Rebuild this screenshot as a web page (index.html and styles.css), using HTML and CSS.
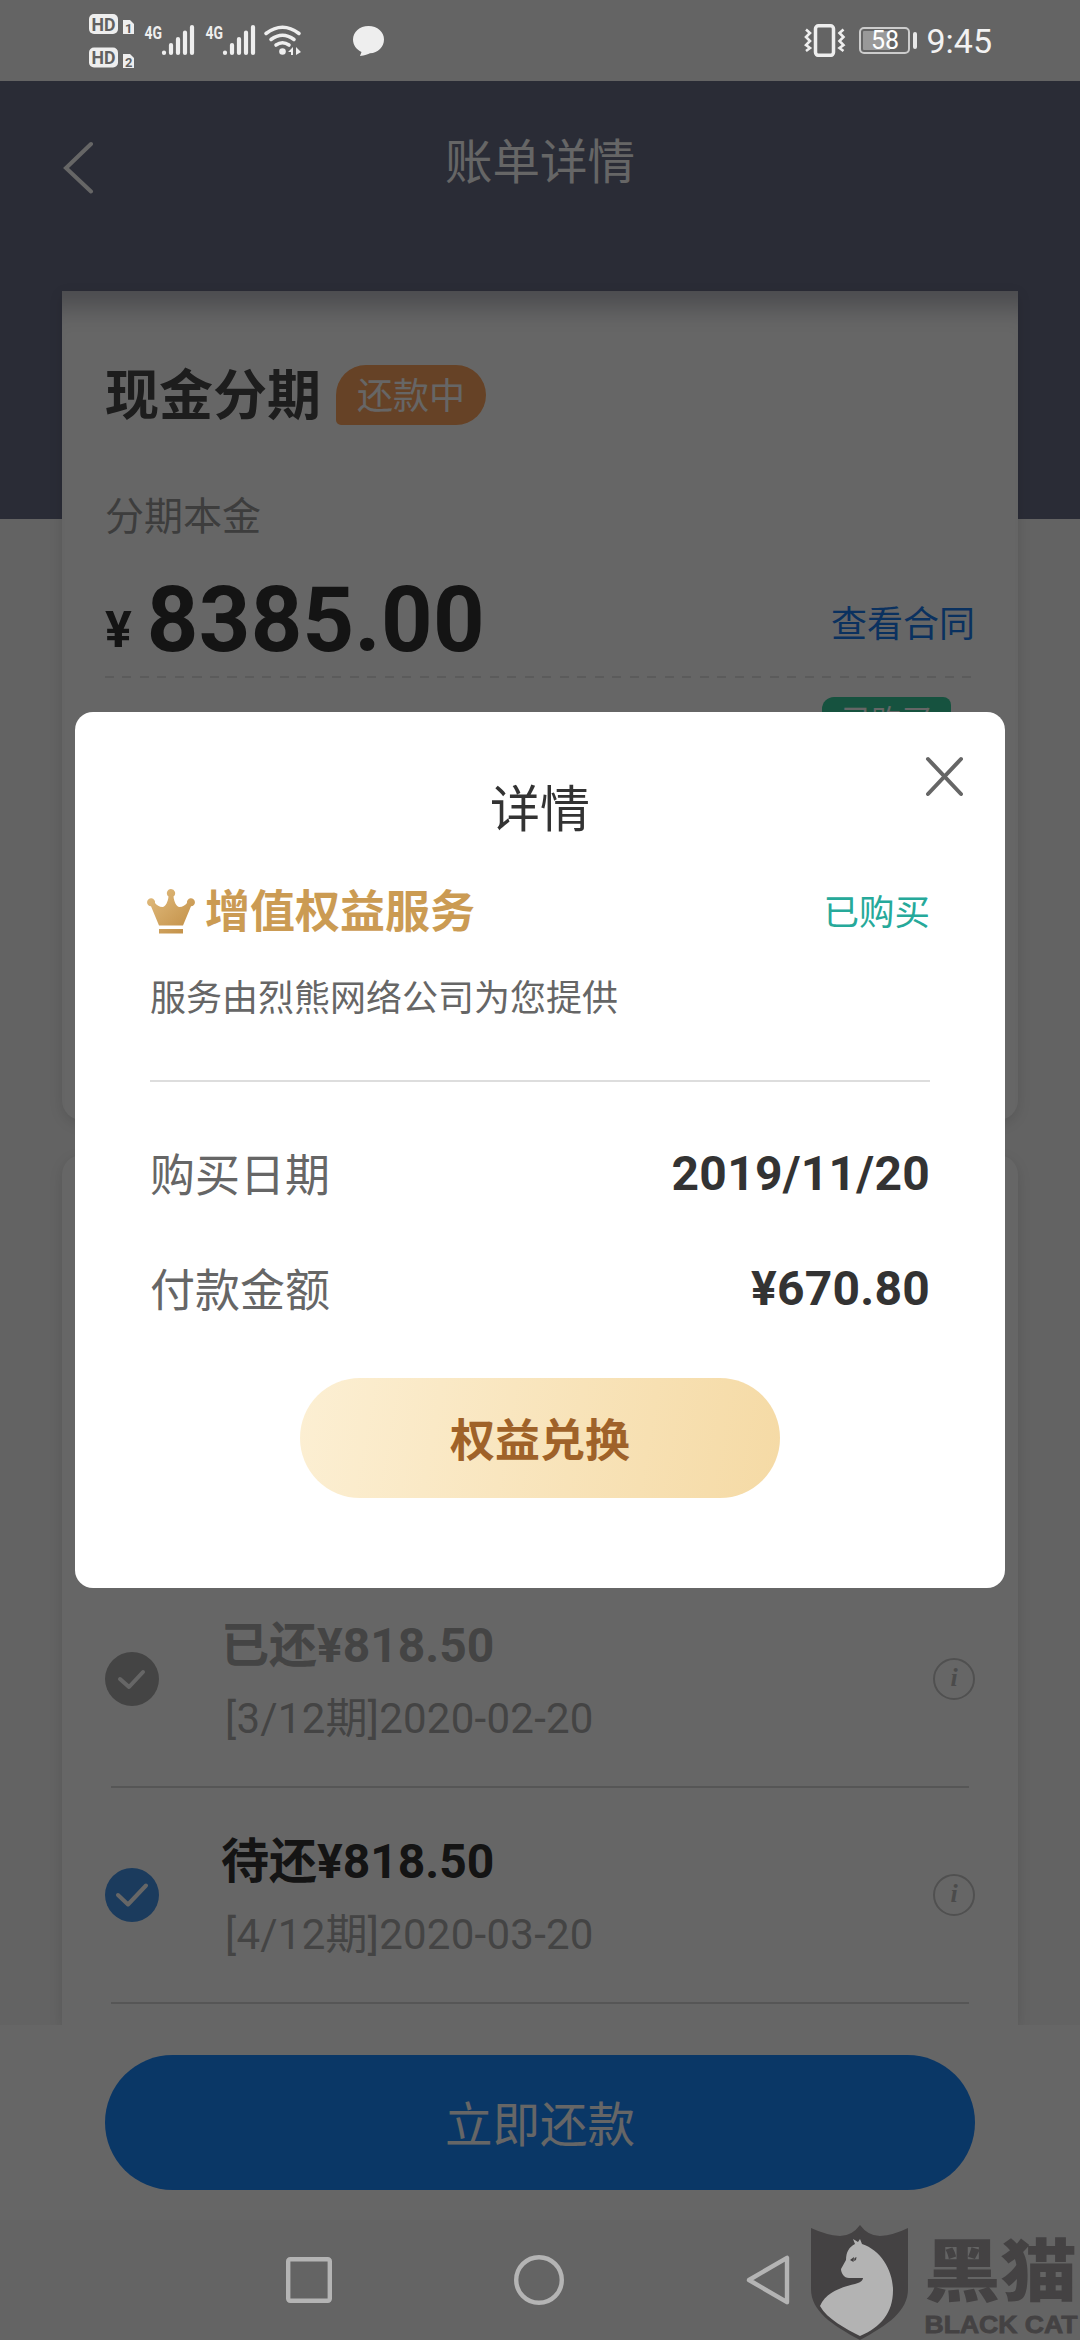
FILE: index.html
```html
<!DOCTYPE html>
<html lang="zh-CN">
<head>
<meta charset="utf-8">
<title>账单详情</title>
<link rel="stylesheet" href="styles.css">
</head>
<body>
<div class="screen">
  <div class="status">
    <svg class="status-left" width="300" height="60" viewBox="88 8 300 60" fill="#eee">
      <rect x="89" y="14" width="29" height="20" rx="5"/>
      <rect x="89" y="47.500" width="29" height="20" rx="5"/>
      <g class="hd-label">
        <text x="91.500" y="30.500" textLength="24" lengthAdjust="spacingAndGlyphs">HD</text>
        <text x="91.500" y="64" textLength="24" lengthAdjust="spacingAndGlyphs">HD</text>
      </g>
      <path d="M123 20h7l4 4v10h-11zM123 54h7l4 4v10h-11z"/>
      <g class="sim-label"><text x="125" y="32.500">1</text><text x="125" y="66.500">2</text></g>
      <g class="net-label">
        <text x="144.500" y="38.500" textLength="17.500" lengthAdjust="spacingAndGlyphs">4G</text>
        <text x="205.500" y="38.500" textLength="17.500" lengthAdjust="spacingAndGlyphs">4G</text>
      </g>
      <g stroke="#eee" stroke-width="4.200" stroke-linecap="round">
        <path d="M164 52.500v.5M171 45v8M178 39v14M185 32.500v20.500M192 27v26"/>
        <path d="M225 52.500v.5M232 45v8M239 39v14M246 32.500v20.500M253 27v26"/>
      </g>
      <g fill="none" stroke="#eee" stroke-width="3.600" stroke-linecap="round">
        <path d="M266 33.500q16.500-12.500 33 0M271 39.500q11.500-8.500 23 0M276 45q6.500-4.500 13 0"/>
      </g>
      <circle cx="282.500" cy="51.500" r="3.300"/>
      <path d="M288 52l5-5v8h-2v-3zM296 47l5 5-5 3z"/>
      <path d="M368.500 26c9 0 15.500 6 15.500 13.500s-6 13.500-14 13.800c-2 .7-5 2.500-10 2.700l1.500-4c-5-2.500-8.500-7-8.500-12.500 0-7.500 6.500-13.500 15.500-13.500z"/>
    </svg>
    <div class="status-right">
      <svg width="42" height="33" viewBox="0 0 42 33" fill="none" stroke="#eee">
        <rect x="11.500" y="1.800" width="18" height="29.500" rx="3" stroke-width="3.500"/>
        <path d="M2 5.500l4 3.500-4 4 4 4-4 4 4 3-4 3M39.500 5.500l-4 3.500 4 4-4 4 4 4-4 3 4 3" stroke-width="2.600"/>
      </svg>
      <div class="battery"><span>58</span></div>
      <div class="battery-tip"></div>
      <div class="clock">9:45</div>
    </div>
  </div>

  <div class="app">
    <div class="page">
      <header class="topbar">
        <svg width="32" height="54" viewBox="0 0 32 54" fill="none" stroke="#fff" stroke-width="4" stroke-linecap="round"><path d="M29 4L4 28l25 23.500"/></svg>
        <h1>账单详情</h1>
      </header>
      <section class="card loan">
        <div class="loan-title"><h2>现金分期</h2><span class="tag">还款中</span></div>
        <div class="label">分期本金</div>
        <div class="amount"><span class="yen">¥</span><span class="num">8385.00</span><a class="link">查看合同</a></div>
        <div class="dashes"></div>
        <div class="bought-tag">已购买</div>
      </section>
      <section class="card plan">
        <div class="row paid">
          <svg class="check" width="54" height="54" viewBox="0 0 54 54"><circle cx="27" cy="27" r="27"/><path d="M15 27l9 8 14-15"/></svg>
          <div class="row-text"><b>已还¥818.50</b><span>[3/12期]2020-02-20</span></div>
          <div class="info">i</div>
        </div>
        <div class="row due">
          <svg class="check" width="54" height="54" viewBox="0 0 54 54"><circle cx="27" cy="27" r="27"/><path d="M13 27l10 9.500 18-19"/></svg>
          <div class="row-text"><b>待还¥818.50</b><span>[4/12期]2020-03-20</span></div>
          <div class="info">i</div>
        </div>
      </section>
      <footer class="pay"><div class="pay-btn">立即还款</div></footer>
    </div>

    <div class="mask">
      <div class="dialog">
        <svg class="close" width="39" height="41" viewBox="0 0 39 41" stroke="#666" stroke-width="4" stroke-linecap="round"><path d="M3 3l33 35M36 3L3 38"/></svg>
        <h3>详情</h3>
        <div class="service">
          <svg width="48" height="45" viewBox="0 0 48 45">
            <defs><linearGradient id="gold" x1="0" y1="0" x2="1" y2="1"><stop offset="0" stop-color="#e2bd80"/><stop offset="1" stop-color="#c08c42"/></linearGradient></defs>
            <path fill="url(#gold)" d="M24 0a4.200 4.200 0 0 1 2.500 7.500c.5 5 3 10.500 6 10.500 3 0 6-2 7.500-4a4 4 0 1 1 4 3.300L36 36.500H12L4 17.300a4 4 0 1 1 4-3.300c1.500 2 4.500 4 7.500 4 3 0 5.500-5.500 6-10.500A4.200 4.200 0 0 1 24 0zM12 40h24v4.500H12z"/>
          </svg>
          <strong>增值权益服务</strong>
          <em>已购买</em>
        </div>
        <p class="provider">服务由烈熊网络公司为您提供</p>
        <div class="pair"><span>购买日期</span><b>2019/11/20</b></div>
        <div class="pair"><span>付款金额</span><b>¥670.80</b></div>
        <div class="redeem">权益兑换</div>
      </div>
    </div>
  </div>

  <div class="navbar">
    <svg width="46" height="46" viewBox="0 0 46 46"><rect x="2.200" y="2.200" width="41.600" height="41.600" rx="2"/></svg>
    <svg width="50" height="50" viewBox="0 0 50 50"><circle cx="25" cy="25" r="22.800"/></svg>
    <svg width="44" height="50" viewBox="0 0 44 50"><path d="M41 2.800v44.400L3 25z"/></svg>
  </div>

  <svg class="watermark" width="270" height="140" viewBox="810 2200 270 140">
    <path fill="#444243" d="M811 2228q15 7 29 8 12 0 20-11 8 11 20 11 14-1 28-8v61c0 22-20 36-48 51-28-15-49-29-49-51z"/>
    <path fill="#b3b3b3" d="M853 2239l5 3 2-3 2 5c19 6 31 27 31 46 0 23-12 37-33 46-14-7-33-17-40-30 6-14 22-19 35-22 4-1 8-3 8-6h-14c-5 0-8-5-8-9l5-9c0-8 3-13 9-16z"/>
    <path fill="#444243" d="M850 2260l4-3-.5 5zM854.500 2258l2-1-.5 3-2 1z"/>
    <text class="wm-cn" transform="translate(924 2296) scale(1 .87)" textLength="153" lengthAdjust="spacingAndGlyphs">黑猫</text>
    <text class="wm-en" x="924.500" y="2333" textLength="153" lengthAdjust="spacingAndGlyphs">BLACK CAT</text>
  </svg>
</div>
</body>
</html>
```

FILE: styles.css
```css
* { box-sizing: border-box; }

body {
  margin: 0;
  font-family: Roboto, "Noto Sans CJK SC", sans-serif;
}

h1, h2, h3, p { margin: 0; font-weight: 400; }
em { font-style: normal; }

.screen {
  position: relative;
  width: 1080px;
  height: 2340px;
  display: flex;
  flex-direction: column;
  overflow: hidden;
  background: #646464;
}

/* status bar */
.status {
  height: 81px;
  padding: 8px 88px 0;
  display: flex;
  justify-content: space-between;
}
.hd-label text { font: 700 18px Roboto, sans-serif; fill: #606060; }
.sim-label text { font: 700 13px Roboto, sans-serif; fill: #606060; }
.net-label text { font: 700 19px Roboto, sans-serif; }
.status-right {
  display: flex;
  align-items: center;
  height: 65px;
}
.battery {
  width: 51px;
  height: 27px;
  margin-left: 13px;
  border: 2px solid #ccc;
  border-radius: 5px;
  padding: 2px;
  background: linear-gradient(90deg, #999 0 27px, transparent 27px) content-box;
  display: grid;
  place-items: center;
}
.battery span { color: #fff; font-size: 25px; line-height: 20px; }
.battery-tip {
  width: 4px;
  height: 17px;
  margin-left: 3px;
  border-radius: 2px;
  background: #e8e8e8;
}
.clock {
  margin-left: 9px;
  font-size: 34px;
  line-height: 40px;
  color: #f2f2f2;
}

/* page and dialog share one cell */
.app { display: grid; height: 2139px; }
.page, .mask { grid-area: 1 / 1; }
.page {
  height: 2139px;
  display: flex;
  flex-direction: column;
  background: linear-gradient(#696e87 0 438px, #f7f7f7 438px);
}
.topbar {
  height: 210px;
  padding: 59px 62px 0;
  display: grid;
  grid-template-columns: 32px 1fr 32px;
  align-items: start;
}
.topbar h1 {
  margin-top: -9px;
  text-align: center;
  font-size: 47.5px;
  line-height: 64px;
  color: #fff;
}
.card {
  margin: 0 62px;
  padding: 0 43px;
  background: #fff;
}
.loan {
  height: 829px;
  border-radius: 0 0 20px 20px;
  box-shadow: inset 0 38px 26px -22px rgba(60, 64, 85, .36), 0 4px 14px rgba(0, 0, 0, .12);
}
.loan-title {
  padding-top: 74px;
  display: flex;
  gap: 15px;
}
.loan-title h2 {
  font-size: 54px;
  line-height: 63px;
  height: 60px;
  font-weight: 700;
  color: #4a4a4a;
}
.tag {
  width: 150px;
  height: 60px;
  border-radius: 30px 30px 30px 5px;
  background: #ffa55f;
  color: #fff;
  font-size: 36px;
  line-height: 65px;
  text-align: center;
}
.label {
  margin-top: 67px;
  font-size: 39px;
  line-height: 50px;
  color: #999;
}
.amount {
  margin-top: 24px;
  height: 110px;
  display: flex;
  align-items: baseline;
  font-weight: 700;
  color: #333;
}
.yen { font-size: 50px; position: relative; top: -4px; }
.num { margin-left: 15px; font-size: 90px; line-height: 110px; letter-spacing: .3px; }
.link {
  margin-left: auto;
  font-size: 36px;
  font-weight: 400;
  color: #1b7cee;
  position: relative;
  top: -14px;
}
.dashes {
  height: 2px;
  background: repeating-linear-gradient(90deg, #e4e4e4 0 9px, transparent 9px 17.5px);
}
.bought-tag {
  width: 129px;
  height: 50px;
  margin: 19px 24px 0 auto;
  border-radius: 12px 8px 0 0;
  background: #39cd9d;
  color: #fff;
  font-size: 30px;
  line-height: 48px;
  text-align: center;
}
.plan {
  flex: 1;
  margin-top: 35px;
  padding-top: 417px;
  border-radius: 20px 20px 0 0;
  box-shadow: 0 4px 14px rgba(0, 0, 0, .12);
}
.row {
  height: 216px;
  padding-bottom: 2px;
  display: flex;
  align-items: center;
  background: linear-gradient(#d8d8d8, #d8d8d8) 6px 214px / 858px 2px no-repeat;
}
.check path {
  fill: none;
  stroke: #fff;
  stroke-width: 4;
  stroke-linecap: round;
  stroke-linejoin: round;
}
.paid .check { fill: #aaa; }
.due .check { fill: #4494e8; }
.row-text {
  flex: 1;
  margin-left: 62px;
  padding-top: 8px;
  display: flex;
  flex-direction: column;
}
.row-text b { font-size: 48px; line-height: 72px; }
.row-text span {
  margin-left: 4px;
  font-size: 42px;
  line-height: 74px;
  letter-spacing: .25px;
  color: #aaa;
}
.paid b { color: #aaa; }
.due b { color: #333; }
.info {
  width: 42px;
  height: 42px;
  border: 2.5px solid #c8c8c8;
  border-radius: 50%;
  font: italic 700 26px/36px "Liberation Serif", serif;
  text-align: center;
  color: #bbb;
}
.pay {
  height: 195px;
  padding: 30px 105px;
  background: #fff;
}
.pay-btn {
  height: 135px;
  border-radius: 68px;
  background: #1b89ff;
  color: #fff;
  font-size: 47.5px;
  line-height: 142px;
  text-align: center;
}

/* dialog */
.mask {
  position: relative;
  z-index: 1;
  display: grid;
  place-items: center;
  padding-bottom: 1px;
  background: rgba(0, 0, 0, .6);
}
.dialog {
  position: relative;
  width: 930px;
  height: 876px;
  padding: 68px 75px 0;
  border-radius: 18px;
  background: #fff;
  color: #333;
}
.close { position: absolute; right: 41px; top: 44px; }
.dialog h3 { font-size: 50px; line-height: 60px; text-align: center; }
.service {
  margin: 43px 0 0 -3px;
  height: 56px;
  display: flex;
  align-items: center;
}
.service strong { margin-left: 10px; font-size: 45px; line-height: 56px; padding-top: 4px; color: #cb9b53; }
.service em { margin-left: auto; font-size: 35.5px; line-height: 56px; padding-top: 4px; color: #26a99a; }
.provider {
  margin-top: 35px;
  padding-bottom: 56px;
  border-bottom: 2px solid #ddd;
  font-size: 36px;
  line-height: 50px;
  color: #666;
}
.pair {
  height: 60px;
  margin-top: 63px;
  display: flex;
  justify-content: space-between;
  font-size: 45px;
  line-height: 64px;
}
.pair + .pair { margin-top: 55px; }
.pair span { color: #666; }
.pair b { font-size: 48px; line-height: 58px; letter-spacing: .25px; }
.redeem {
  width: 480px;
  height: 120px;
  margin: 58px auto 0;
  border-radius: 60px;
  background: linear-gradient(100deg, #fcefd3, #f5daa5);
  color: #9f6229;
  font-size: 45px;
  font-weight: 700;
  line-height: 127px;
  text-align: center;
}

/* system navigation */
.navbar {
  height: 120px;
  padding: 0 290px 0 286px;
  display: flex;
  justify-content: space-between;
  align-items: center;
}
.navbar svg { fill: none; stroke: #b4b4b4; stroke-width: 4.4; stroke-linejoin: round; }

.watermark { position: absolute; right: 0; bottom: 0; }
.wm-cn { font: 900 78px "Noto Sans CJK SC", sans-serif; fill: #444243; }
.wm-en { font: 700 24px "Liberation Sans", sans-serif; fill: #444243; stroke: #444243; stroke-width: .8; }
```
